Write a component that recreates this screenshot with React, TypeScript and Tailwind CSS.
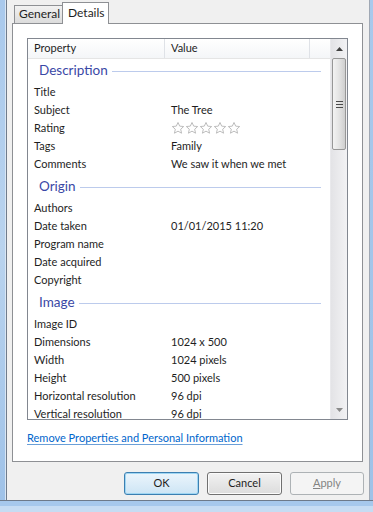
const FONT = "font-['Lato','Noto_Sans',sans-serif]"

type Row = { label: string; value?: string; stars?: boolean }
const GROUPS: { title: string; h: string; rows: Row[] }[] = [
  {
    title: 'Description',
    h: 'h-[24px]',
    rows: [
      { label: 'Title' },
      { label: 'Subject', value: 'The Tree' },
      { label: 'Rating', stars: true },
      { label: 'Tags', value: 'Family' },
      { label: 'Comments', value: 'We saw it when we met' },
    ],
  },
  {
    title: 'Origin',
    h: 'h-[26px]',
    rows: [
      { label: 'Authors' },
      { label: 'Date taken', value: '01/01/2015 11:20' },
      { label: 'Program name' },
      { label: 'Date acquired' },
      { label: 'Copyright' },
    ],
  },
  {
    title: 'Image',
    h: 'h-[26px]',
    rows: [
      { label: 'Image ID' },
      { label: 'Dimensions', value: '1024 x 500' },
      { label: 'Width', value: '1024 pixels' },
      { label: 'Height', value: '500 pixels' },
      { label: 'Horizontal resolution', value: '96 dpi' },
      { label: 'Vertical resolution', value: '96 dpi' },
    ],
  },
]

function Star() {
  return (
    <svg width="14" height="14" viewBox="0 0 24 24" className="shrink-0">
      <path
        d="M12 2.5l2.9 6.3 6.8.7-5.1 4.6 1.5 6.8L12 17.4l-6.1 3.5 1.5-6.8-5.1-4.6 6.8-.7z"
        fill="#fff"
        stroke="#b4b4b4"
        strokeWidth="1.5"
        strokeLinejoin="round"
      />
    </svg>
  )
}

function Scrollbar() {
  return (
    <div className="w-[17px] flex flex-col bg-gradient-to-r from-[#e3e3e6] to-[#f2f2f4] border-l border-[#e9e9ec]">
      <div className="h-[19px] flex items-center justify-center">
        <svg width="7" height="4" viewBox="0 0 7 4"><path d="M0 4L3.5 0 7 4z" fill="#404040" /></svg>
      </div>
      <div className="mx-px h-[92px] rounded-[2px] border border-[#979797] bg-gradient-to-r from-[#f3f3f3] via-[#e4e4e4] to-[#cfcfcf] flex flex-col items-center justify-center gap-[2px]">
        <div className="w-[7px] h-px bg-[#4a4a4a]" />
        <div className="w-[7px] h-px bg-[#4a4a4a]" />
        <div className="w-[7px] h-px bg-[#4a4a4a]" />
      </div>
      <div className="flex-1" />
      <div className="h-[19px] flex items-center justify-center">
        <svg width="7" height="4" viewBox="0 0 7 4"><path d="M0 0L3.5 4 7 0z" fill="#8a8a8a" /></svg>
      </div>
    </div>
  )
}

export default function App() {
  return (
    <div className={`w-[373px] h-[512px] flex flex-col bg-[#f0f0f0] text-[11px] text-[#1e1e1e] ${FONT}`}>
      <div className="flex h-[500px]">
        <div className="w-[5px] bg-gradient-to-b from-[#a9c9ec] via-[#b9d3ee] to-[#9fc2e8]" />
        <div className="w-px bg-[#d9e6f4]" />
        <div className="w-px bg-[#707c8c]" />
        <div className="flex-1 flex flex-col">
          {/* tabs */}
          <div className="flex items-end h-[23px] pl-[7px]">
            <div className="h-[18px] w-[49px] border border-b-0 border-[#8e9094] bg-gradient-to-b from-[#f2f2f2] to-[#dcdcdc] pl-[4px] leading-[16px] -mr-px text-[12px]">
              General
            </div>
            <div className="relative z-10 h-[22px] w-[47px] border border-b-0 border-[#8e9094] bg-white pl-[5px] leading-[19px] -mb-px text-[12px]">
              Details
            </div>
          </div>
          {/* panel */}
          <div className="ml-[5px] w-[351px] h-[439px] border border-[#8e9094] bg-white flex flex-col">
            <div className="mt-[14px] ml-[14px] w-[321px] h-[382px] border border-[#828790] flex overflow-hidden">
              <div className="flex-1 flex flex-col overflow-hidden">
                <div className="h-[20px] flex shrink-0 border-b border-[#e5e5e5] bg-gradient-to-b from-white to-[#f4f6f8]">
                  <div className="w-[137px] pl-[6px] flex items-center border-r border-[#dfe2e7]">Property</div>
                  <div className="w-[145px] pl-[6px] flex items-center border-r border-[#dfe2e7]">Value</div>
                  <div className="flex-1" />
                </div>
                {GROUPS.map(g => (
                  <div key={g.title}>
                    <div className={`${g.h} flex items-end pb-[4px] pl-[11px] pr-[9px]`}>
                      <span className="text-[13.5px] leading-[18px] text-[#3a48a6]">{g.title}</span>
                      <div className="flex-1 h-px bg-[#bccbec] ml-[4px] mb-[7px]" />
                    </div>
                    {g.rows.map(r => (
                      <div key={r.label} className="h-[18px] flex items-center whitespace-nowrap">
                        <div className="w-[137px] pl-[6px]">{r.label}</div>
                        <div className="pl-[6px] flex items-center">
                          {r.stars ? [0, 1, 2, 3, 4].map(i => <Star key={i} />) : r.value}
                        </div>
                      </div>
                    ))}
                  </div>
                ))}
              </div>
              <Scrollbar />
            </div>
            <div className="ml-[14px] mt-[10px] text-[#0066cc] underline underline-offset-2 decoration-[#6a9fd8]">
              Remove Properties and Personal Information
            </div>
          </div>
          {/* buttons */}
          <div className="flex justify-end gap-[8px] pr-[5px] mt-[10px]">
            <div className="w-[75px] h-[23px] rounded-[3px] border border-[#3c7fb1] bg-gradient-to-b from-[#ecf5fc] to-[#cde5f5] flex items-center justify-center shadow-[inset_0_0_0_1px_#9fd6f3]">
              OK
            </div>
            <div className="w-[75px] h-[23px] rounded-[3px] border border-[#707070] bg-gradient-to-b from-[#f2f2f2] to-[#dcdcdc] flex items-center justify-center shadow-[inset_0_0_0_1px_#fbfbfb]">
              Cancel
            </div>
            <div className="w-[74px] h-[23px] rounded-[3px] border border-[#adb2b5] bg-[#f4f4f4] flex items-center justify-center text-[#838383]">
              <span><span className="underline">A</span>pply</span>
            </div>
          </div>
        </div>
        <div className="w-px bg-[#a0a8b4]" />
        <div className="w-[3px] bg-gradient-to-b from-[#a9c9ec] to-[#9fc2e8]" />
      </div>
      <div className="h-px bg-[#6d7a8a]" />
      <div className="h-[5px] bg-[#a6c8ec]" />
      <div className="h-[6px] bg-[#c6dcf3]" />
    </div>
  )
}
